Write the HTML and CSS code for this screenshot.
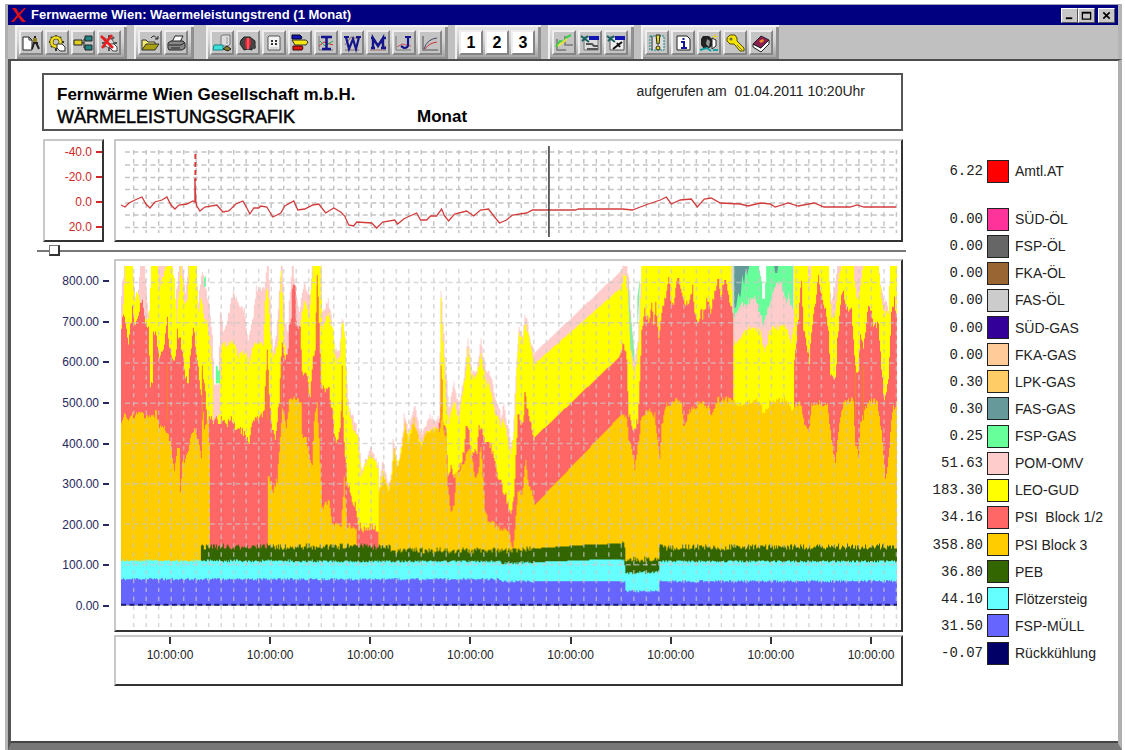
FILE: index.html
```html
<!DOCTYPE html>
<html lang="de">
<head>
<meta charset="utf-8">
<title>Fernwaerme Wien: Waermeleistungstrend (1 Monat)</title>
<link rel="stylesheet" href="styles.css">
</head>
<body>
<div class="window">
  <header class="titlebar">
    <svg class="title-icon" viewBox="0 0 16 16" aria-hidden="true"><path d="M1 1h4l3 5 5-5h2L9 8l6 7h-4L7 10l-4 5H0l6-7z" fill="#d8101c"/></svg>
    <h1 class="title">Fernwaerme Wien: Waermeleistungstrend (1 Monat)</h1>
    <button class="win-btn" aria-label="Minimieren"><svg viewBox="0 0 12 10"><path d="M2 8h7" stroke="#000" stroke-width="2"/></svg></button>
    <button class="win-btn" aria-label="Maximieren"><svg viewBox="0 0 12 10"><path d="M1.5 1v8h9V1M1 1.5h10" fill="none" stroke="#000" stroke-width="1.4"/><path d="M1 2.5h10" stroke="#000"/></svg></button>
    <button class="win-btn win-close" aria-label="Schließen"><svg viewBox="0 0 12 10"><path d="M2.5 1.5l7 7m0-7l-7 7" stroke="#000" stroke-width="1.8"/></svg></button>
  </header>

  <nav class="toolbar" aria-label="Werkzeuge">
    <div class="group">
      <button class="tool" aria-label="Neu"><svg viewBox="0 0 20 20"><path d="M2 4h6l3 3v10H2z" fill="#fff" stroke="#222"/><path d="M8 4v3h3" fill="none" stroke="#222"/><path d="M14 3v4l-3 9M14 7l4 9M12 10h5" stroke="#222" stroke-width="2" fill="none"/><path d="M12 5h4v4h-4z" fill="#8c8420"/></svg></button>
      <button class="tool" aria-label="Einstellungen"><svg viewBox="0 0 20 20"><path d="M9 2v16M2 9h15M4 4l11 11M14 4L4 14" stroke="#333" stroke-width="2"/><circle cx="9" cy="9" r="4.500" fill="#c4c4c4" stroke="#5c5400" stroke-width="4"/><circle cx="9" cy="9" r="4.500" fill="none" stroke="#f0dc20" stroke-width="2.500"/><path d="M10 11h5l3 3v4h-5l-3-3z" fill="#fff" stroke="#333"/></svg></button>
      <button class="tool" aria-label="Struktur"><svg viewBox="0 0 20 20"><path d="M8 10h3V6h3M11 10v5h3" fill="none" stroke="#222"/><path d="M1 7h8v5H1z" fill="#e0d020" stroke="#222"/><path d="M12 3h7v5h-7zM12 12h7v5h-7z" fill="#208484" stroke="#222"/></svg></button>
      <button class="tool" aria-label="Löschen"><svg viewBox="0 0 20 20"><path d="M10 2v16M3 10h15M5 5l10 10M15 4L5 14" stroke="#555" stroke-width="2"/><circle cx="10" cy="10" r="4.500" fill="#ddd" stroke="#666"/><path d="M11 11h4l3 3v4h-4l-3-3z" fill="#fff" stroke="#444"/><path d="M2 3l12 12M13 2L3 15" stroke="#e81c1c" stroke-width="2.500"/></svg></button>
    </div>
    <div class="group">
      <button class="tool" aria-label="Öffnen"><svg viewBox="0 0 20 20"><path d="M2 17V7h4l2 2h7v3" fill="#f4ec70" stroke="#333"/><path d="M2 17l4-6h13l-4 6z" fill="#a8a010" stroke="#333"/><path d="M11 5c3-4 5-1 6 1m1-3v3h-3" fill="none" stroke="#222"/></svg></button>
      <button class="tool" aria-label="Drucken"><svg viewBox="0 0 20 20"><path d="M6 9l3-6h8l-3 6z" fill="#fff" stroke="#222"/><path d="M2 10l3-2h12l2 2v5l-3 2H3l-1-2z" fill="#888" stroke="#222"/><path d="M3 12h12l3-2M5 15h9" stroke="#222" fill="none"/></svg></button>
    </div>
    <div class="group group-wide">
      <button class="tool" aria-label="Rechner"><svg viewBox="0 0 20 20"><path d="M9 3l2-1h7v9l-2 2H9z" fill="#ddd" stroke="#777"/><path d="M15 4v7" stroke="#999"/><path d="M2 12h9v5H1z" fill="#40e0d8" stroke="#188"/><path d="M11 16l4-3 4 3-3 2z" fill="#887a20" stroke="#222"/></svg></button>
      <button class="tool" aria-label="Stopp"><svg viewBox="0 0 20 20"><path d="M6 4h6l5 4v7h-3v2l-4-1-4 1-4-6 1-4z" fill="#444" stroke="#222"/><path d="M8 5h4l1 5-2 6H8l-1-6z" fill="#e82030"/><path d="M10 5v11" stroke="#fff" stroke-opacity=".5"/><circle cx="16" cy="14" r="2" fill="#444"/></svg></button>
      <button class="tool" aria-label="Protokoll"><svg viewBox="0 0 20 20"><path d="M5 3h10l1 1v13H4V4z" fill="#f4f4f4" stroke="#555"/><path d="M8 7v5M12 7v5" stroke="#333" stroke-width="2" stroke-dasharray="2 1"/><path d="M6 15h8" stroke="#bbb"/></svg></button>
      <button class="tool" aria-label="Balken"><svg viewBox="0 0 20 20"><path d="M2 2h8l2 2-1 2H2z" fill="#1414b4" stroke="#002"/><path d="M2 7h14l2 2-2 3H5z" fill="#f8e810" stroke="#333"/><path d="M3 13h9l1 2-1 2H3z" fill="#e01818" stroke="#400"/></svg></button>
      <button class="tool" aria-label="Tagestrend"><svg viewBox="0 0 20 20"><path d="M3 3v14h14" fill="none" stroke="#777"/><path d="M3 13l5-4 9 3" stroke="#d22" fill="none"/><path d="M4 8l5 5 8-5" stroke="#2a5" fill="none"/><path d="M5 4h11M10.500 4v12M6 16h9" stroke="#14148c" stroke-width="2.500"/></svg></button>
      <button class="tool" aria-label="Wochentrend"><svg viewBox="0 0 20 20"><path d="M3 17h14M3 12l6-8 8 2" fill="none" stroke="#866"/><path d="M2 4h5M14 4h5M4 4l3 12 4-10 3 10 3-12" fill="none" stroke="#14148c" stroke-width="2.200"/></svg></button>
      <button class="tool" aria-label="Monatstrend"><svg viewBox="0 0 20 20"><path d="M2 17h16M12 9l6 5" stroke="#966" fill="none"/><path d="M3 15h4M13 15h5M5 15V5l5 8 5-8v10M3 5h3M14 5h4" fill="none" stroke="#14148c" stroke-width="2.400"/></svg></button>
      <button class="tool" aria-label="Jahrestrend"><svg viewBox="0 0 20 20"><path d="M2 3v14h15" fill="none" stroke="#777"/><path d="M3 14l5-3 9 2" stroke="#c55" fill="none"/><path d="M11 4h6M14 4v8q0 3-4 3l-3-2" fill="none" stroke="#14148c" stroke-width="2.200"/></svg></button>
      <button class="tool" aria-label="Kurve"><svg viewBox="0 0 20 20"><path d="M3 3v14h15" fill="none" stroke="#777" stroke-width="1.500"/><path d="M4 16Q7 6 17 5" fill="none" stroke="#446"/><path d="M5 16q4-6 12-7" fill="none" stroke="#c33"/></svg></button>
    </div>
    <div class="group">
      <button class="tool num">1</button>
      <button class="tool num">2</button>
      <button class="tool num">3</button>
    </div>
    <div class="group">
      <button class="tool" aria-label="Trend"><svg viewBox="0 0 20 20"><path d="M3 6v11h9M11 3v9h8" fill="none" stroke="#777" stroke-width="1.500"/><path d="M2 14l4-6 3 1 4-5 4-2" fill="none" stroke="#38d048" stroke-width="2"/><path d="M4 13l4-3 5-4" fill="none" stroke="#f0e040" stroke-width="2"/></svg></button>
      <button class="tool" aria-label="Fenster öffnen"><svg viewBox="0 0 20 20"><path d="M4 4h14v13H4z" fill="#ddd" stroke="#777"/><path d="M9 3h10v4H9z" fill="#1414b4"/><path d="M1 3l8 6M2 8l6-5" stroke="#176060" stroke-width="2"/><path d="M6 11h6l2 2h4M7 16h11" stroke="#555" stroke-width="2" fill="none"/></svg></button>
      <button class="tool" aria-label="Fenster bearbeiten"><svg viewBox="0 0 20 20"><path d="M4 4h14v13H4z" fill="#eee" stroke="#555"/><path d="M9 3h10v4H9z" fill="#1414b4"/><path d="M1 3l8 6M2 8l6-5" stroke="#176060" stroke-width="2"/><path d="M7 16l9-7M11 10l3 4" stroke="#111" stroke-width="2"/></svg></button>
    </div>
    <div class="group">
      <button class="tool" aria-label="Alarm"><svg viewBox="0 0 20 20"><path d="M3 3h14v14H3z" fill="#ddd" stroke="#188" stroke-dasharray="2 1"/><path d="M5 3v14" stroke="#222"/><path d="M9 2h4l-1 9h-2z" fill="#e8dc20" stroke="#222"/><circle cx="11" cy="15" r="2" fill="#e8dc20" stroke="#222"/></svg></button>
      <button class="tool" aria-label="Information"><svg viewBox="0 0 20 20"><path d="M4 3h10l3 3v11H4z" fill="#fff" stroke="#222"/><path d="M10.500 5v2M8 9h3v6M8 15h6" stroke="#14149c" stroke-width="2" fill="none"/></svg></button>
      <button class="tool" aria-label="Benutzer"><svg viewBox="0 0 20 20"><path d="M4 3h6l3 3v7l-4 3H5l-3-4V6z" fill="#222"/><path d="M8 6l3 2-1 6-3-3z" fill="#999"/><path d="M13 5l4 2v6l-4 3z" fill="#fff" stroke="#222"/><path d="M1 17l7-2 4 3M14 17h5" stroke="#19a0a0" stroke-width="2" fill="none"/><path d="M16 1v5M13.500 3.500h5" stroke="#e8d020"/></svg></button>
      <button class="tool" aria-label="Schlüssel"><svg viewBox="0 0 20 20"><path d="M2 5l3-3h5l2 3v3l7 7v3h-4l-6-7H5L2 8z" fill="#f4e400" stroke="#554c00"/><circle cx="6" cy="6" r="1.500" fill="#665"/><path d="M12 12l5 5" stroke="#777"/></svg></button>
      <button class="tool" aria-label="Hilfe"><svg viewBox="0 0 20 20"><path d="M2 11l8 4 8-8v4l-8 8-8-5z" fill="#fff" stroke="#222"/><path d="M2 11l8-8 8 4-8 8z" fill="#8c2050" stroke="#222"/><path d="M8 8l4-2 1 2-3 2" fill="#f09020"/></svg></button>
    </div>
  </nav>

  <main class="content">
    <section class="charts">
      <div class="heading">
        <h2 class="company">Fernwärme Wien Gesellschaft m.b.H.</h2>
        <p class="called">aufgerufen am&nbsp; 01.04.2011 10:20Uhr</p>
        <p class="kind">WÄRMELEISTUNGSGRAFIK</p>
        <p class="period">Monat</p>
      </div>

      <div class="row temp-row">
        <ul class="axis temp-axis panel"><li>-40.0</li><li>-20.0</li><li>0.0</li><li>20.0</li></ul>
        <div class="panel plot"><svg id="temp" viewBox="115 140 786 99" preserveAspectRatio="none" role="img" aria-label="Außentemperatur"></svg></div>
      </div>

      <input class="cursor" type="range" min="0" max="1000" value="14" aria-label="Zeitcursor">

      <div class="row power-row">
        <ul class="axis power-axis"><li>800.00</li><li>700.00</li><li>600.00</li><li>500.00</li><li>400.00</li><li>300.00</li><li>200.00</li><li>100.00</li><li>0.00</li></ul>
        <div class="panel plot"><svg id="power" viewBox="115 260 786 371" preserveAspectRatio="none" role="img" aria-label="Wärmeleistung"></svg></div>
      </div>

      <ol class="panel times"><li>10:00:00</li><li>10:00:00</li><li>10:00:00</li><li>10:00:00</li><li>10:00:00</li><li>10:00:00</li><li>10:00:00</li><li>10:00:00</li></ol>
    </section>

    <aside class="legend">
      <dl class="entry"><dd>6.22</dd><dt class="c-at">Amtl.AT</dt></dl>
      <div class="entries">
        <dl class="entry"><dd>0.00</dd><dt class="c-sued-oel">SÜD-ÖL</dt></dl>
        <dl class="entry"><dd>0.00</dd><dt class="c-fsp-oel">FSP-ÖL</dt></dl>
        <dl class="entry"><dd>0.00</dd><dt class="c-fka-oel">FKA-ÖL</dt></dl>
        <dl class="entry"><dd>0.00</dd><dt class="c-fas-oel">FAS-ÖL</dt></dl>
        <dl class="entry"><dd>0.00</dd><dt class="c-sued-gas">SÜD-GAS</dt></dl>
        <dl class="entry"><dd>0.00</dd><dt class="c-fka-gas">FKA-GAS</dt></dl>
        <dl class="entry"><dd>0.30</dd><dt class="c-lpk-gas">LPK-GAS</dt></dl>
        <dl class="entry"><dd>0.30</dd><dt class="c-fas-gas">FAS-GAS</dt></dl>
        <dl class="entry"><dd>0.25</dd><dt class="c-fsp-gas">FSP-GAS</dt></dl>
        <dl class="entry"><dd>51.63</dd><dt class="c-pom">POM-OMV</dt></dl>
        <dl class="entry"><dd>183.30</dd><dt class="c-leo">LEO-GUD</dt></dl>
        <dl class="entry"><dd>34.16</dd><dt class="c-psi12">PSI&nbsp; Block 1/2</dt></dl>
        <dl class="entry"><dd>358.80</dd><dt class="c-psi3">PSI Block 3</dt></dl>
        <dl class="entry"><dd>36.80</dd><dt class="c-peb">PEB</dt></dl>
        <dl class="entry"><dd>44.10</dd><dt class="c-floetz">Flötzersteig</dt></dl>
        <dl class="entry"><dd>31.50</dd><dt class="c-muell">FSP-MÜLL</dt></dl>
        <dl class="entry"><dd>-0.07</dd><dt class="c-rueck">Rückkühlung</dt></dl>
      </div>
    </aside>
  </main>
</div>
<script src="charts.js"></script>
</body>
</html>
```
FILE: styles.css
```css
* { box-sizing: border-box; }
body, h1, h2, p, ul, ol, dl, dd, dt { margin: 0; padding: 0; }
ul, ol { list-style: none; }

body {
  background: #fff;
  color: #222;
  font-family: "Liberation Sans", Arial, sans-serif;
}

.window {
  display: flex;
  flex-direction: column;
  min-height: 100vh;
  padding: 4px 3px 0 5px;
}

.titlebar {
  display: flex;
  align-items: center;
  height: 21px;
  padding: 0 3px 0 2px;
  border-top: 1px solid #a0a0b8;
  border-left: 3px solid #b0b0b0;
  border-right: 4px solid #b4b4b4;
  background: #000080;
  color: #fff;
}
.title-icon { width: 16px; height: 16px; margin-left: 1px; }
.title { flex: 1; margin-left: 4px; font-size: 13px; line-height: 18px; font-weight: bold; }
.win-btn {
  display: flex;
  width: 17px;
  height: 15px;
  padding: 1px 2px;
  border: 1px solid;
  border-color: #fff #555 #555 #fff;
  background: #c8c8c8;
}
.win-btn svg { width: 100%; height: 100%; }
.win-close { margin-left: 3px; }

.toolbar {
  display: flex;
  gap: 7px;
  height: 34px;
  padding-left: 7px;
  border-left: 3px solid #b0b0b0;
  border-right: 4px solid #b4b4b4;
  background: #c0c0c0;
}
.group {
  display: flex;
  gap: 2px;
  padding: 4px 6px 4px 4px;
  border-top: 1px solid #eee;
  background: linear-gradient(to bottom, #e4e4e4, #d0d0d0 50%, #a0a0a0);
  box-shadow: inset 2px 1px 0 #f0f0f0, inset -3px -2px 0 #909090;
}
.group-wide { margin-left: 5px; }
.tool {
  width: 24px;
  height: 25px;
  padding: 0;
  border: 2px solid;
  border-color: #eee #858585 #858585 #eee;
  background: #c4c4c4;
}
.tool svg { display: block; width: 20px; height: 20px; }
.num { background: #fff; color: #000; font: bold 16px/20px "Liberation Sans", Arial, sans-serif; }

.content {
  flex: 1;
  display: flex;
  padding: 12px 0 57px 31px;
  margin-left: 3px;
  border-top: 2px solid #4c4c4c;
  border-left: 3px solid #555;
  border-right: 4px solid #b0b0b0;
  border-bottom: 7px solid #777;
  box-shadow: -3px 0 0 #b8b8b8, inset 0 -2px 0 #444;
}

.charts { flex: 1; display: flex; flex-direction: column; min-width: 0; }

.heading {
  display: grid;
  grid-template-columns: 360px 1fr auto;
  padding: 9px 36px 3px 13px;
  height: 58px;
  border: 2px solid #555;
  color: #000;
  font-size: 17px;
  line-height: 22px;
}
.company { grid-column: 1 / 3; font-size: 17px; font-weight: bold; }
.called { font-size: 14px; line-height: 14px; color: #222; }
.kind { font-size: 18px; -webkit-text-stroke: 0.5px #000; }
.period { font-weight: bold; }

.row { display: flex; }
.panel {
  border-top: 2px solid #c8c8c8;
  border-left: 2px solid #c8c8c8;
  border-right: 2px solid #333;
  border-bottom: 2px solid #333;
}
.plot { flex: 1; min-width: 0; min-height: 0; }
.plot svg { display: block; width: 100%; height: 100%; }

.axis { display: flex; flex-direction: column; justify-content: space-between; font-size: 12px; line-height: 14px; }
.axis li { display: flex; align-items: center; justify-content: flex-end; }
.axis li::after { content: ""; width: 6px; height: 2px; margin-left: 4px; background: currentColor; }

.temp-row { height: 103px; margin-top: 8px; }
.temp-axis { width: 61px; margin: 0 10px 0 1px; padding: 4px 0 6px; color: #d02828; }

.cursor {
  appearance: none;
  width: auto;
  height: 11px;
  margin: 3px -3px 3px -5px;
  background: linear-gradient(#777, #777) center / 100% 2px no-repeat;
}
.cursor::-webkit-slider-thumb {
  appearance: none;
  width: 11px;
  height: 11px;
  border: 1px solid #777;
  border-right: 2px solid #333;
  border-bottom: 2px solid #333;
  background: #fff;
}

.power-row { flex: 1; min-height: 260px; }
.power-axis { width: 72px; padding: 15px 5px 19px 0; color: #28285c; }
.power-row .plot { display: grid; }
.power-row .plot svg { height: 0; min-height: 100%; }

.times {
  display: flex;
  justify-content: space-between;
  height: 51px;
  margin: 3px 0 0 72px;
  padding: 0 0 0 24px;
  font-size: 12px;
  line-height: 14px;
}
.times li { width: 60px; text-align: center; }
.times li::before { content: ""; display: block; width: 2px; height: 7px; margin: 0 auto 4px; background: #333; }

.legend { display: flex; flex-direction: column; justify-content: space-between; flex: 0 0 215px; padding: 87px 0 22px; }
.entries { flex: 1; display: flex; flex-direction: column; justify-content: space-between; margin-top: 26px; }
.entry { display: flex; align-items: center; height: 22px; }
.entry dd { width: 80px; text-align: right; font: 14px/20px "Liberation Mono", monospace; }
.entry dt { display: flex; align-items: center; font-size: 14px; line-height: 20px; white-space: nowrap; }
.entry dt::before { content: ""; width: 20px; height: 21px; margin: 0 6px 0 4px; border: 1px solid #222; background: var(--c); }

.c-at { --c: #ff0000; }
.c-sued-oel { --c: #ff3399; }
.c-fsp-oel { --c: #666666; }
.c-fka-oel { --c: #996633; }
.c-fas-oel { --c: #cccccc; }
.c-sued-gas { --c: #330099; }
.c-fka-gas { --c: #ffcc99; }
.c-lpk-gas { --c: #ffcc66; }
.c-fas-gas { --c: #669999; }
.c-fsp-gas { --c: #66ff99; }
.c-pom { --c: #ffcccc; }
.c-leo { --c: #ffff00; }
.c-psi12 { --c: #ff6666; }
.c-psi3 { --c: #ffcc00; }
.c-peb { --c: #336600; }
.c-floetz { --c: #66ffff; }
.c-muell { --c: #6666ff; }
.c-rueck { --c: #000066; }
```
FILE: charts.js
```js
const NS = "http://www.w3.org/2000/svg";

function add(svg, name, attrs) {
  const el = document.createElementNS(NS, name);
  for (const key in attrs) el.setAttribute(key, attrs[key]);
  svg.appendChild(el);
}

function points(text) {
  return text.trim().split(/\s+/).map(p => p.split(",").map(Number));
}

let seed = 7;
function noise() {
  seed = (seed * 1103515245 + 12345) % 2147483648;
  return seed / 2147483648 - 0.5;
}

const BASE = 606;
const TOP = 265;

// Stepped area under a contour; the interpolated gap (534-622) has no measuring noise.
function area(svg, color, text, jitter) {
  const pts = points(text);
  let d = `M${pts[0][0]} ${BASE}`;
  let k = 0;
  for (let x = pts[0][0]; x < pts[pts.length - 1][0]; x++) {
    while (pts[k + 1][0] <= x) k++;
    const [x0, y0] = pts[k];
    const [x1, y1] = pts[k + 1];
    let y = y0 + (y1 - y0) * (x - x0) / (x1 - x0);
    const smooth = x > 533 && x < 622;
    if (!smooth && y > TOP + 1 && y < BASE) y += noise() * jitter;
    d += `V${Math.min(BASE, Math.max(TOP, Math.round(y)))}h1`;
  }
  add(svg, "path", { d: d + `V${BASE}z`, fill: color });
}

function grid(svg, xs, top, bottom, ys, color) {
  for (const x of xs) add(svg, "path", { d: `M${x} ${top}V${bottom}`, stroke: color, "stroke-width": 1.5, "stroke-dasharray": "4.5 4.4" });
  for (const y of ys) add(svg, "path", { d: `M124 ${y}H896`, stroke: color, "stroke-width": 1.5, "stroke-dasharray": "5 3.5" });
}

const columns = [];
for (let x = 132.7; x < 898; x += 12.52) columns.push(x);

const temp = document.getElementById("temp");
grid(temp, columns, 149, 232, [151, 164, 176.5, 188.5, 202, 214, 226.5], "#c4c4c4");
add(temp, "polyline", {
  points: "120,204 124,206 128,202 134,199 141,196 145,203 149,207 154,201 161,199 166,196 170,204 174,208 178,204 186,203 192,200 194,201 194,178 195,201 196,205 199,210 204,206 216,204 222,211 228,210 235,203 242,200 246,207 249,213 253,207 258,207 260,205 266,206 272,216 280,212 284,205 293,200 297,209 304,208 312,204 318,203 325,212 333,207 340,211 344,215 348,224 353,225 356,221 371,222 376,227 382,221 394,219 397,223 403,218 407,216 416,212 420,219 426,219 430,215 436,215 441,208 444,215 448,220 454,213 466,210 473,215 480,209 488,208 494,216 499,222 506,219 512,214 526,212 532,209 575,209 578,208 622,208 632,209 640,206 648,203 660,199 666,196 671,203 680,199 691,198 697,206 704,198 711,197 720,202 740,203 748,205 760,202 770,203 775,206 788,202 798,205 814,202 824,206 850,206 857,204 864,206 896,206",
  fill: "none", stroke: "#d43c3c", "stroke-width": 1.3
});
add(temp, "path", { d: "M194.500 153V180", stroke: "#d43c3c", "stroke-width": 2, "stroke-dasharray": "5 3" });
add(temp, "path", { d: "M548.500 145V236", stroke: "#333", "stroke-width": 1.5 });

const power = document.getElementById("power");
const green = "733,265 758,265 761,280 762,298 764,298 766,265 792,265 793,606";
const pink = `120,292 123,265 131,265 134,300 137,292 139,265 143,265 146,300 148,320 150,265
  171,265 174,300 178,265 181,265 184,290 187,265 195,265 197,300 201,270 205,290 208,305 211,335 213,383
  217,383 219,310 222,330 225,325 232,290 237,303 243,310 247,340 252,315 255,288 263,288 266,265
  267,265 269,300 272,352 275,332 280,265 281,265 284,320 287,330 288,300 291,265 292,265 294,290 298,308
  303,285 309,295 311,265 320,265 321,310 327,300 330,315 333,350 338,350 341,315 343,330 345,370 348,410
  352,415 355,425 358,440 360,470 365,460 370,448 377,465 378,485 382,460 387,488 390,478 392,440 397,465
  402,433 403,411 407,432 414,405 420,435 428,415 435,418 438,420 440,289 442,320 445,370 448,410
  453,382 458,405 463,378 467,340 471,370 476,368 480,340 485,372 488,368 495,400 500,415 503,405 507,428
  510,445 512,440 513,415 516,355 518,325 522,335 524,312 529,335 533,353 620,270 623,265 626,265
  628,275 631,322 634,364 637,340 639,298 641,265 732,265 733,318 740,305 748,300 754,298 759,310
  763,325 769,302 776,285 780,282 785,300 788,295 792,310 793,265 828,265 831,300 834,285 837,265
  878,265 881,290 885,300 888,310 890,265 896,265 897,265`;
const yellow = `120,325 122,300 124,265 131,265 133,300 136,290 140,310 146,320 148,310 150,265 156,265
  158,290 161,275 166,265 170,265 173,280 175,320 178,290 180,265 183,300 186,300 188,265 195,265 197,310
  200,300 203,320 206,320 209,345 211,380 212,420 218,415 220,345 232,342 237,355 245,352 248,365 252,345
  262,342 264,300 266,285 269,330 272,360 277,340 280,270 283,340 287,360 298,340 301,310 304,300 308,320
  312,265 319,265 321,330 327,313 332,330 335,362 339,355 341,320 344,340 346,400 352,430 357,440 360,475
  366,462 370,455 377,470 378,492 382,470 387,492 390,482 393,450 397,468 402,440 404,425 407,440 413,420
  419,445 428,430 435,430 439,430 440,300 442,340 445,400 448,425 453,400 458,420 463,385 467,350 471,378
  476,375 480,350 485,385 488,382 495,415 500,425 503,420 507,440 510,455 513,435 516,370 518,335 522,342
  524,322 529,340 533,364 620,287 624,272 627,290 630,350 634,378 638,340 640,300 641,265 730,265 733,345 740,335
  750,326 760,330 764,353 770,328 785,325 790,340 793,330 794,265 807,265 809,285 811,265 828,265 831,320
  835,310 838,280 841,265 853,265 856,300 859,290 863,265 878,265 881,300 885,318 888,310 890,265 897,265`;
const red = `120,325 122,315 124,325 127,340 130,320 131,305 134,325 137,312 139,305 141,297 144,320
  147,325 149,383 151,380 152,335 155,335 158,355 162,350 166,315 167,340 171,358 174,360 176,330 180,345
  183,370 187,383 190,345 192,330 195,350 198,380 200,398 201,370 204,395 206,420 215,420 222,420 225,427
  230,417 235,428 241,430 245,440 248,442 252,420 260,417 263,410 266,345 268,395 271,430 274,440 278,400
  281,340 284,360 287,350 288,325 290,320 291,284 294,285 295,320 299,330 301,375 305,375 309,395 312,360
  314,350 316,275 318,320 320,385 324,390 327,385 331,410 334,440 338,435 341,400 343,440 346,480 350,500
  354,505 357,525 360,529 377,528 378,606 437,606 438,420 440,410 441,381 442,420 445,430 447,475 451,467 453,480
  458,470 463,450 465,425 468,432 470,450 473,455 476,450 478,425 480,427 483,440 490,447 497,475 510,512 513,495
  516,440 517,412 520,425 523,415 524,390 526,410 528,415 533,438 618,357 623,345 626,360 628,415 633,432
  637,420 639,380 641,332 644,305 646,322 649,315 651,300 653,320 655,300 658,335 661,310 665,295 668,278
  671,305 674,300 677,275 680,285 684,305 688,300 692,287 694,310 698,325 700,305 702,318 706,300 710,310
  714,290 718,277 720,295 725,278 728,295 732,315 733,606 793,606 794,360 798,315 800,290 801,282 803,330
  806,345 809,360 811,330 815,300 818,278 821,295 825,310 828,330 830,375 835,380 837,340 840,300 843,290
  847,310 851,305 855,370 858,375 860,330 863,350 866,320 869,302 873,322 878,325 881,370 884,400 888,375
  891,315 894,300 897,320`;
const orange = `120,420 124,415 127,418 130,415 140,415 150,415 155,412 158,425 163,428 167,432 170,450
  173,470 176,450 178,450 179,490 181,465 187,450 190,432 193,428 197,440 200,455 201,400 203,430 207,420
  208,440 209,606 266,606 267,475 272,490 276,480 279,440 281,405 285,430 288,402 295,398 300,402 301,435
  305,440 307,450 311,465 313,420 316,400 318,440 320,480 321,510 324,505 328,500 331,525 340,525 343,480
  346,525 352,528 355,530 356,606 377,606 378,492 382,475 387,492 390,482 393,450 397,468 402,440 404,425
  407,440 413,420 419,445 428,430 435,430 439,430 440,410 445,440 447,490 450,513 453,505 455,475 460,470
  463,465 466,450 470,445 473,475 477,475 480,445 484,510 487,520 497,527 508,530 512,550 514,530 517,490
  521,495 525,460 527,480 530,490 534,505 623,412 626,420 628,440 632,455 634,468 638,440 641,415 648,410
  654,415 657,440 659,457 661,425 666,405 676,398 681,405 683,425 690,410 700,402 706,405 712,415 716,400
  722,398 733,402 740,405 745,402 757,400 763,412 770,402 785,400 792,410 800,402 803,420 808,435 811,405
  820,402 827,405 831,440 835,465 838,430 843,402 853,400 855,445 858,455 860,420 868,400 877,402 881,430
  885,480 888,460 892,410 897,400`;

area(power, "#66ff99", green, 0);
add(power, "path", { d: "M734 265h15l-2 9-2-4-1 14-2-10-1 15-1 8-2-5-2 14-2 2z", fill: "#669999" });
add(power, "path", { d: "M774 265h4l-1 7h-2z", fill: "#669999" });
area(power, "#ffcccc", pink, 7);
area(power, "#ffff00", yellow, 7);
area(power, "#ff6666", red, 9);
area(power, "#ffcc00", orange, 7);
area(power, "#336600", "200,547 300,547 389,547 390,551 500,551 533,549 590,545 622,544 624,547 625,560 658,560 659,548 897,547", 6);
area(power, "#66ffff", "120,561 320,562 500,562 501,564 533,563 600,560 623,560 625,574 658,573 659,562 897,562", 3);
area(power, "#6666ff", "120,580 500,580 501,582 624,582 625,592 658,592 659,582 897,582", 2);
add(power, "path", { d: "M215 365v18h2v-17zM217 370h2v13h-2zM203 277v9h2v-11z", fill: "#66ff99" });
add(power, "path", { d: "M627 268l3 45 4 38v12l-4-16-2-50zM640 276l-2 40-1 10v-30z", fill: "#88eea0" });
const orangeBars = [166, 201, 266, 280, 316, 341, 440, 524, 855, 863];
for (const x of orangeBars) add(power, "path", { d: `M${x}.5 ${x === 316 ? 285 : x === 524 ? 392 : 365}v${x === 524 ? 30 : 55}`, stroke: "#ee8820" });

grid(power, columns, 268, 628, [281.5, 322, 362.5, 403, 443.5, 484, 524.5, 565.5], "#c8c8c8b0");
add(power, "path", { d: `M120 ${BASE - 0.5}H897`, stroke: "#1c1c80", "stroke-width": 2, "stroke-dasharray": "5 3.5" });
```
